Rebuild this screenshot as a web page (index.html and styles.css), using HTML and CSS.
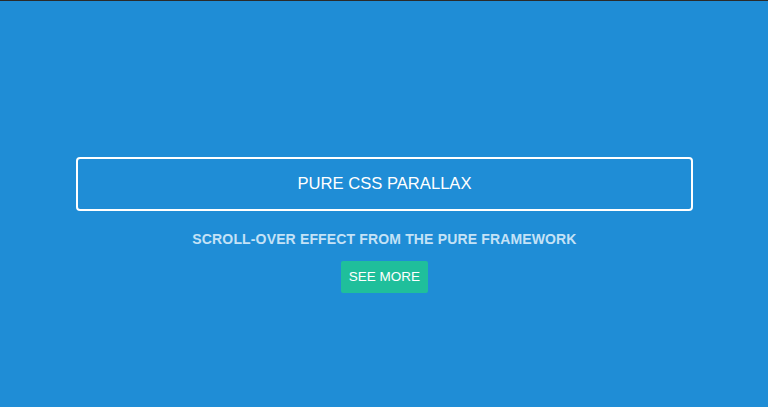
FILE: index.html
```html
<!DOCTYPE html>
<html>
<head>
	<title>Pure CSS Parallax</title>
	<link rel="stylesheet" href="styles.css">
</head>
<body>
	<div class="splash">
		<div class="splash-inner">
			<h1 class="splash-head">PURE CSS PARALLAX</h1>
			<p class="splash-subhead">SCROLL-OVER EFFECT FROM THE PURE FRAMEWORK</p>
			<a href="#" class="tombol">SEE MORE</a>
		</div>
	</div>
</body>
</html>
```

FILE: styles.css
```css
body{
	margin: 0;
	background: #1f8dd6;
	border-top: 1px solid #2b2b2b;
	font-family: 'Liberation Sans', Arial, sans-serif;
}
.splash{
	height: 406px;
	box-sizing: border-box;
	padding-top: 156px;
}
.splash-inner{
	display: flex;
	flex-direction: column;
	align-items: center;
	margin: 0 75px 0 76px;
}
.splash-head{
	box-sizing: border-box;
	width: 100%;
	height: 54px;
	margin: 0;
	border: 2px solid #fff;
	border-radius: 4px;
	color: #fff;
	font-size: 16.6px;
	font-weight: normal;
	line-height: 50px;
	text-align: center;
}
.splash-subhead{
	margin: 20px 0 0;
	color: #c4e2f6;
	font-size: 14px;
	font-weight: bold;
	letter-spacing: 0.15px;
}
.tombol{
	margin-top: 14px;
	width: 87px;
	height: 32px;
	line-height: 32px;
	text-align: center;
	background: #1fbf9b;
	border-radius: 2px;
	color: #fff;
	font-size: 13.5px;
	text-decoration: none;
}
```
